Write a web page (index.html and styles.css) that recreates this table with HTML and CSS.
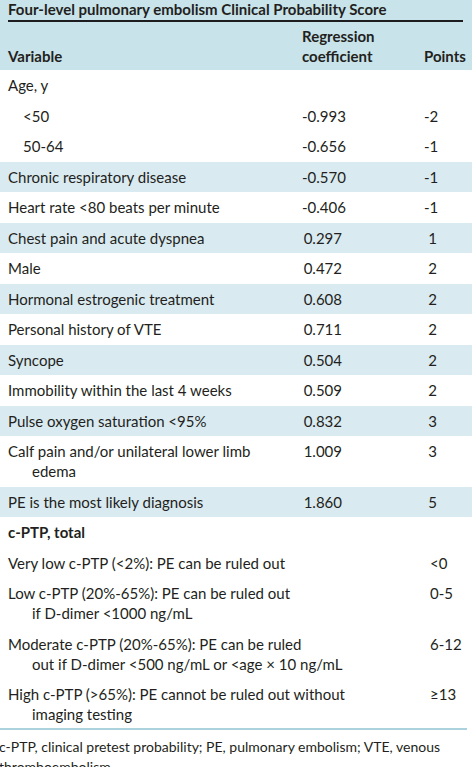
FILE: index.html
```html
<!DOCTYPE html>
<html lang="en">
<head>
    <meta charset="UTF-8">
    <meta name="viewport" content="width=device-width, initial-scale=1.0">
    <title>Four-level pulmonary embolism Clinical Probability Score</title>
    <link rel="stylesheet" href="styles.css">
</head>
<body>
    <table class="score-table">
        <colgroup>
            <col class="col-var">
            <col class="col-coef">
            <col class="col-pts">
        </colgroup>
        <thead>
            <tr class="title-row">
                <th colspan="3"><div class="title">Four-level pulmonary embolism Clinical Probability Score</div></th>
            </tr>
            <tr class="head-row">
                <th>Variable</th>
                <th>Regression<br>coefficient</th>
                <th>Points</th>
            </tr>
        </thead>
        <tbody>
            <tr>
                <td>Age, y</td>
                <td></td>
                <td></td>
            </tr>
            <tr>
                <td class="sub">&lt;50</td>
                <td><span class="num">-0.993</span></td>
                <td><span class="pts">-2</span></td>
            </tr>
            <tr>
                <td class="sub">50-64</td>
                <td><span class="num">-0.656</span></td>
                <td><span class="pts">-1</span></td>
            </tr>
            <tr class="band">
                <td>Chronic respiratory disease</td>
                <td><span class="num">-0.570</span></td>
                <td><span class="pts">-1</span></td>
            </tr>
            <tr>
                <td>Heart rate &lt;80 beats per minute</td>
                <td><span class="num">-0.406</span></td>
                <td><span class="pts">-1</span></td>
            </tr>
            <tr class="band">
                <td>Chest pain and acute dyspnea</td>
                <td><span class="num">0.297</span></td>
                <td><span class="pts">1</span></td>
            </tr>
            <tr>
                <td>Male</td>
                <td><span class="num">0.472</span></td>
                <td><span class="pts">2</span></td>
            </tr>
            <tr class="band">
                <td>Hormonal estrogenic treatment</td>
                <td><span class="num">0.608</span></td>
                <td><span class="pts">2</span></td>
            </tr>
            <tr>
                <td>Personal history of VTE</td>
                <td><span class="num">0.711</span></td>
                <td><span class="pts">2</span></td>
            </tr>
            <tr class="band">
                <td>Syncope</td>
                <td><span class="num">0.504</span></td>
                <td><span class="pts">2</span></td>
            </tr>
            <tr>
                <td>Immobility within the last 4 weeks</td>
                <td><span class="num">0.509</span></td>
                <td><span class="pts">2</span></td>
            </tr>
            <tr class="band">
                <td>Pulse oxygen saturation &lt;95%</td>
                <td><span class="num">0.832</span></td>
                <td><span class="pts">3</span></td>
            </tr>
            <tr>
                <td>Calf pain and/or unilateral lower limb<span class="cont">edema</span></td>
                <td><span class="num">1.009</span></td>
                <td><span class="pts">3</span></td>
            </tr>
            <tr class="band">
                <td>PE is the most likely diagnosis</td>
                <td><span class="num">1.860</span></td>
                <td><span class="pts">5</span></td>
            </tr>
            <tr>
                <td colspan="3" class="section">c-PTP, total</td>
            </tr>
            <tr>
                <td colspan="2">Very low c-PTP (&lt;2%): PE can be ruled out</td>
                <td><span class="score">&lt;0</span></td>
            </tr>
            <tr>
                <td colspan="2">Low c-PTP (20%-65%): PE can be ruled out<span class="cont">if D-dimer &lt;1000 ng/mL</span></td>
                <td><span class="score">0-5</span></td>
            </tr>
            <tr>
                <td colspan="2">Moderate c-PTP (20%-65%): PE can be ruled<span class="cont">out if D-dimer &lt;500 ng/mL or &lt;age &times; 10 ng/mL</span></td>
                <td><span class="score">6-12</span></td>
            </tr>
            <tr>
                <td colspan="2">High c-PTP (&gt;65%): PE cannot be ruled out without<span class="cont">imaging testing</span></td>
                <td><span class="score">&ge;13</span></td>
            </tr>
        </tbody>
    </table>

    <p class="footnote">c-PTP, clinical pretest probability; PE, pulmonary embolism; VTE, venous thromboembolism</p>
</body>
</html>
```

FILE: styles.css
```css
* {
    margin: 0;
    padding: 0;
    box-sizing: border-box;
}

body {
    font-family: Lato, 'Open Sans', sans-serif;
    font-size: 15px;
    color: #231f20;
    background: #fff;
    width: 474px;
    overflow: hidden;
}

.score-table {
    width: 472px;
    border-collapse: collapse;
    table-layout: fixed;
}

.score-table th,
.score-table td {
    text-align: left;
    vertical-align: top;
    line-height: 20px;
    padding: 5.25px 0 5.25px 8px;
    white-space: nowrap;
}

.score-table thead tr {
    background: #c8e3ea;
}

.title-row th {
    padding: 0 9px 0 8px;
}

.title {
    font-weight: 700;
    height: 22px;
    line-height: 18px;
    border-bottom: 2px solid #1d1d1f;
}

.head-row th {
    font-weight: 700;
    vertical-align: bottom;
    height: 48px;
    padding-top: 4px;
    padding-bottom: 4px;
}

.col-var {
    width: 294px;
}

.col-coef {
    width: 122px;
}

.col-pts {
    width: 56px;
}

.band {
    background: #daeaf1;
}

.sub {
    padding-left: 23px !important;
}

.cont {
    display: block;
    padding-left: 24px;
}

.num {
    display: inline-block;
    width: 40px;
    text-align: right;
}

.pts {
    display: inline-block;
    width: 13px;
    text-align: right;
}

.score {
    margin-left: 6px;
}

.section {
    font-weight: 700;
}

.footnote {
    width: 468px;
    margin-left: -1px;
    margin-top: -2px;
    padding-top: 7px;
    border-top: 2px solid #abd3de;
    font-size: 14px;
    line-height: 20px;
}
```
